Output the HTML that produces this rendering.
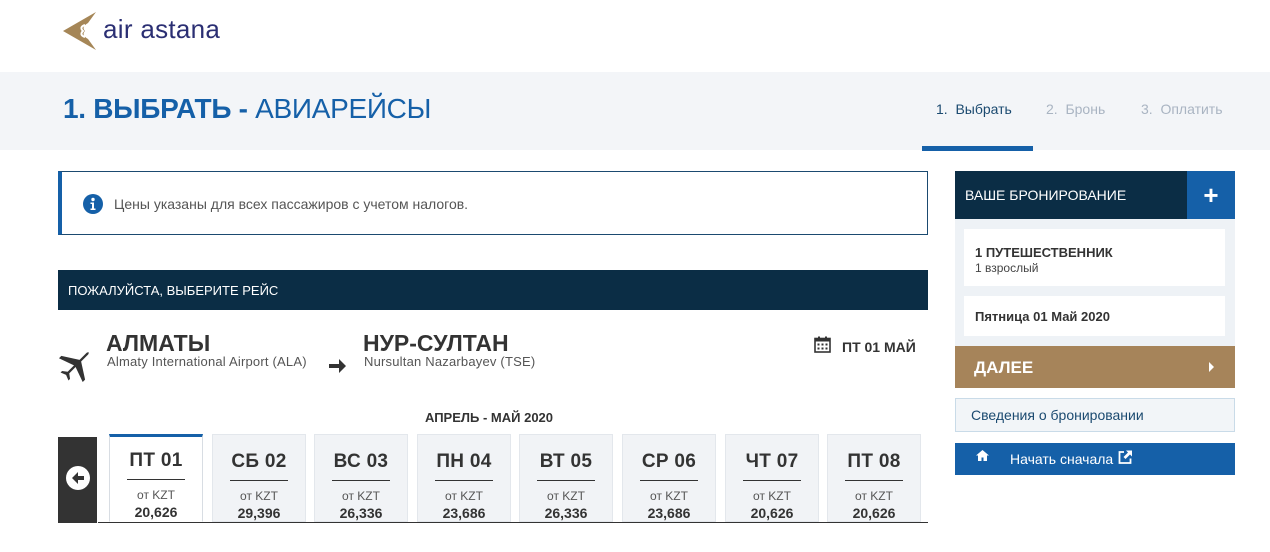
<!DOCTYPE html>
<html><head><meta charset="utf-8"><style>
*{box-sizing:border-box;margin:0;padding:0}
body{width:1270px;height:552px;background:#fff;font-family:"Liberation Sans",Arial,sans-serif;position:relative;overflow:hidden;color:#333}
.abs{position:absolute}
.tab{position:absolute;top:434px;width:94px;height:88px;background:#f1f3f6;border:1px solid #e3e7ec;text-align:center}
.tab .d{font-size:19px;font-weight:bold;color:#333;margin-top:16px;letter-spacing:.3px}
.tab .l{width:58px;height:1px;background:#333;margin:7px auto 0}
.tab .o{font-size:12px;color:#555;margin-top:8px}
.tab .p{font-size:14px;font-weight:bold;color:#333;margin-top:2px}
.tab.act{background:#fff;border-top:3px solid #1560a8;border-color:#1560a8 #d8dde3 #fff #d8dde3}
.tab.act .d{margin-top:13px}
</style></head><body>
<!-- logo -->
<svg class="abs" style="left:63px;top:11px" width="36" height="40" viewBox="0 0 36 40"><path d="M33 1 L0 20 L33 39 L25 28 Q18 24 22 20 Q18 16 25 12 Z" fill="#a58657"/><path d="M22 14 q-6 2 -2 6 q-4 4 2 6" stroke="#fff" stroke-width="2" fill="none"/></svg>
<div class="abs" style="left:103px;top:14px;font-size:26px;color:#2b2f73;letter-spacing:.3px">air astana</div>
<!-- gray band -->
<div class="abs" style="left:0;top:72px;width:1270px;height:78px;background:#f3f5f8"></div>
<div class="abs" style="left:63px;top:93px;font-size:28px;color:#1560a8;letter-spacing:-.3px"><b>1. ВЫБРАТЬ -</b> АВИАРЕЙСЫ</div>
<div class="abs" style="left:936px;top:101px;font-size:14px;color:#1b4a70">1.&nbsp; Выбрать</div>
<div class="abs" style="left:1046px;top:101px;font-size:14px;color:#a9b4c2">2.&nbsp; Бронь</div>
<div class="abs" style="left:1141px;top:101px;font-size:14px;color:#a9b4c2">3.&nbsp; Оплатить</div>
<div class="abs" style="left:922px;top:146px;width:111px;height:5px;background:#1560a8"></div>
<!-- info -->
<div class="abs" style="left:58px;top:171px;width:870px;height:64px;border:1px solid #1b4a70;border-left:4px solid #1560a8"></div>
<svg class="abs" style="left:83px;top:194px" width="20" height="20" viewBox="0 0 20 20"><circle cx="10" cy="10" r="10" fill="#1560a8"/><circle cx="10" cy="5.5" r="1.7" fill="#fff"/><path d="M7.5 8.5h3.5v6h1.5v1.5h-5v-1.5h1.5v-4.5h-1.5z" fill="#fff"/></svg>
<div class="abs" style="left:114px;top:196px;font-size:14px;color:#555">Цены указаны для всех пассажиров с учетом налогов.</div>
<!-- dark bar -->
<div class="abs" style="left:58px;top:270px;width:870px;height:40px;background:#0b2d45"></div>
<div class="abs" style="left:68px;top:283px;font-size:13px;color:#fff">ПОЖАЛУЙСТА, ВЫБЕРИТЕ РЕЙС</div>
<!-- route -->
<svg class="abs" style="left:55px;top:348px" width="38" height="38" viewBox="0 0 24 24"><path d="M21 4 Q22 2 20 3 L15.5 7.5 L4 5 L2.5 6.5 L12 11 L8 15 L4.5 14.5 L3.5 15.5 L7 17 L8.5 20.5 L9.5 19.5 L9 16 L13 12 L17.5 21.5 L19 20 L16.5 8.5 Z" fill="#333"/></svg>
<div class="abs" style="left:106px;top:330px;font-size:23px;font-weight:bold;color:#333">АЛМАТЫ</div>
<div class="abs" style="left:107px;top:354px;font-size:13px;color:#555;letter-spacing:.2px">Almaty International Airport (ALA)</div>
<svg class="abs" style="left:327px;top:357px" width="20" height="18" viewBox="0 0 20 18"><path d="M2 7h10V2l7 7-7 7v-5H2z" fill="#333"/></svg>
<div class="abs" style="left:363px;top:330px;font-size:23px;font-weight:bold;color:#333">НУР-СУЛТАН</div>
<div class="abs" style="left:364px;top:354px;font-size:13px;color:#555;letter-spacing:.2px">Nursultan Nazarbayev (TSE)</div>
<svg class="abs" style="left:814px;top:336px" width="17" height="17" viewBox="0 0 17 17"><rect x="1" y="2.5" width="15" height="13.5" fill="none" stroke="#333" stroke-width="1.6"/><rect x="1" y="2.5" width="15" height="3" fill="#333"/><rect x="4" y="0.5" width="2" height="3" fill="#333"/><rect x="11" y="0.5" width="2" height="3" fill="#333"/><g fill="#333"><rect x="3.5" y="7.5" width="2" height="2"/><rect x="7.5" y="7.5" width="2" height="2"/><rect x="11.5" y="7.5" width="2" height="2"/><rect x="3.5" y="11.5" width="2" height="2"/><rect x="7.5" y="11.5" width="2" height="2"/><rect x="11.5" y="11.5" width="2" height="2"/></g></svg>
<div class="abs" style="left:842px;top:339px;font-size:14px;font-weight:bold;color:#333">ПТ 01 МАЙ</div>
<div class="abs" style="left:425px;top:410px;font-size:13px;font-weight:bold;color:#333">АПРЕЛЬ - МАЙ 2020</div>
<!-- tabs -->
<div class="abs" style="left:58px;top:437px;width:39px;height:86px;background:#333"></div>
<svg class="abs" style="left:66px;top:466px" width="24" height="24" viewBox="0 0 24 24"><circle cx="12" cy="12" r="12" fill="#fff"/><path d="M6 12l6-6v4h6v4h-6v4z" fill="#333"/></svg>
<div class="abs" style="left:98px;top:522px;width:830px;height:1px;background:#333"></div>
<div class="tab act" style="left:109px"><div class="d">ПТ 01</div><div class="l"></div><div class="o">от KZT</div><div class="p">20,626</div></div>
<div class="tab" style="left:212px"><div class="d">СБ 02</div><div class="l"></div><div class="o">от KZT</div><div class="p">29,396</div></div>
<div class="tab" style="left:314px"><div class="d">ВС 03</div><div class="l"></div><div class="o">от KZT</div><div class="p">26,336</div></div>
<div class="tab" style="left:417px"><div class="d">ПН 04</div><div class="l"></div><div class="o">от KZT</div><div class="p">23,686</div></div>
<div class="tab" style="left:519px"><div class="d">ВТ 05</div><div class="l"></div><div class="o">от KZT</div><div class="p">26,336</div></div>
<div class="tab" style="left:622px"><div class="d">СР 06</div><div class="l"></div><div class="o">от KZT</div><div class="p">23,686</div></div>
<div class="tab" style="left:725px"><div class="d">ЧТ 07</div><div class="l"></div><div class="o">от KZT</div><div class="p">20,626</div></div>
<div class="tab" style="left:827px"><div class="d">ПТ 08</div><div class="l"></div><div class="o">от KZT</div><div class="p">20,626</div></div>
<!-- right panel -->
<div class="abs" style="left:955px;top:171px;width:280px;height:48px;background:#0b2d45"></div>
<div class="abs" style="left:965px;top:187px;font-size:14px;color:#fff">ВАШЕ БРОНИРОВАНИЕ</div>
<div class="abs" style="left:1187px;top:171px;width:48px;height:48px;background:#1560a8;color:#fff;font-size:26px;font-weight:bold;text-align:center;line-height:48px">+</div>
<div class="abs" style="left:955px;top:219px;width:280px;height:128px;background:#eef2f6"></div>
<div class="abs" style="left:964px;top:229px;width:261px;height:57px;background:#fff"></div>
<div class="abs" style="left:975px;top:245px;font-size:13px;font-weight:bold;color:#333">1 ПУТЕШЕСТВЕННИК</div>
<div class="abs" style="left:975px;top:261px;font-size:12px;color:#444">1 взрослый</div>
<div class="abs" style="left:964px;top:296px;width:261px;height:40px;background:#fff"></div>
<div class="abs" style="left:975px;top:309px;font-size:13px;font-weight:bold;color:#333">Пятница 01 Май 2020</div>
<div class="abs" style="left:955px;top:346px;width:280px;height:42px;background:#a6845a"></div>
<div class="abs" style="left:974px;top:358px;font-size:17px;font-weight:bold;color:#fff">ДАЛЕЕ</div>
<div class="abs" style="left:1209px;top:362px;width:0;height:0;border-left:5px solid #fff;border-top:5px solid transparent;border-bottom:5px solid transparent"></div>
<div class="abs" style="left:955px;top:398px;width:280px;height:34px;background:#f2f5f8;border:1px solid #c9dbe8"></div>
<div class="abs" style="left:971px;top:407px;font-size:14px;color:#1b4a70">Сведения о бронировании</div>
<div class="abs" style="left:955px;top:443px;width:280px;height:32px;background:#1560a8"></div>
<svg class="abs" style="left:976px;top:450px" width="13" height="11" viewBox="0 0 13 11"><path d="M6.5 0L0 5.5h2V11h3.5V7.5h2V11H11V5.5h2z" fill="#fff"/></svg>
<div class="abs" style="left:1010px;top:451px;font-size:14px;color:#fff">Начать сначала</div>
<svg class="abs" style="left:1118px;top:450px" width="15" height="14" viewBox="0 0 15 14"><path d="M6 2H1.5v11h11V8.5" fill="none" stroke="#fff" stroke-width="1.8"/><path d="M8 0.5h6v6l-2-2-4.5 4.5-2-2L10 2.5z" fill="#fff"/></svg>
</body></html>
